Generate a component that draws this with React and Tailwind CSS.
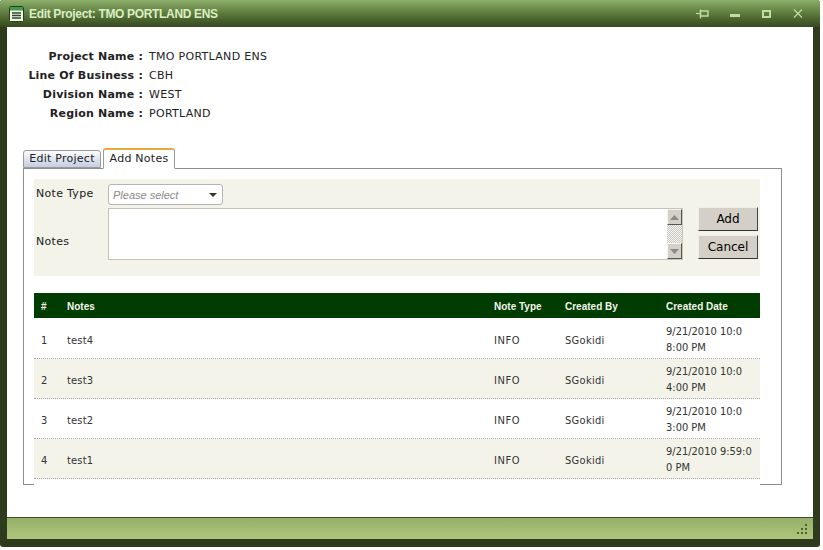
import React from 'react';

const info = [
  { label: 'Project Name :', value: 'TMO PORTLAND ENS' },
  { label: 'Line Of Business :', value: 'CBH' },
  { label: 'Division Name :', value: 'WEST' },
  { label: 'Region Name :', value: 'PORTLAND' },
];

// the date column wraps mid-word in the original grid
const notes = [
  { id: 1, note: 'test4', type: 'INFO', by: 'SGokidi', date: ['9/21/2010 10:0', '8:00 PM'] },
  { id: 2, note: 'test3', type: 'INFO', by: 'SGokidi', date: ['9/21/2010 10:0', '4:00 PM'] },
  { id: 3, note: 'test2', type: 'INFO', by: 'SGokidi', date: ['9/21/2010 10:0', '3:00 PM'] },
  { id: 4, note: 'test1', type: 'INFO', by: 'SGokidi', date: ['9/21/2010 9:59:0', '0 PM'] },
];

const WindowIcon = () => (
  <svg width="15" height="16" viewBox="0 0 15 16">
    <rect x="0.5" y="0.5" width="14" height="15" rx="1" fill="#f2f8e8" stroke="#26401a" />
    <rect x="1" y="1" width="13" height="3.5" fill="#3f9a4a" />
    <path d="M3 7h9M3 9.5h9M3 12h9" stroke="#2c4a2a" strokeWidth="1.3" />
  </svg>
);

const TitleButtons = () => (
  <div className="flex items-center">
    <svg width="13" height="10" viewBox="0 0 13 10" className="mr-[21px]">
      <path d="M0 4.5h4" stroke="#c5dba6" strokeWidth="1.2" />
      <path d="M4.5 2h7.5v5h-7.5z" fill="#5d7a3f" stroke="#c5dba6" strokeWidth="1.4" />
      <path d="M4.5 0.5v9" stroke="#c5dba6" strokeWidth="1.2" />
    </svg>
    <div className="w-[10px] h-[3px] bg-[#c5dba6] mr-[22px] mt-[3px]" />
    <div className="w-[9px] h-[8px] border-2 border-[#c5dba6] mr-[22px]" />
    <svg width="10" height="9" viewBox="0 0 10 9" className="mr-[17px]">
      <path d="M1 0.5l8 8M9 0.5l-8 8" stroke="#c5dba6" strokeWidth="1.2" />
    </svg>
  </div>
);

const ScrollArrow = ({ up }) => (
  <div className="w-[15px] h-[16px] bg-[#d4d0c8] border border-t-[#f4f4f0] border-l-[#f4f4f0] border-r-[#555] border-b-[#555] flex items-center justify-center">
    <svg width="9" height="5" viewBox="0 0 9 5">
      <path d={up ? 'M4.5 0L9 5H0z' : 'M0 0h9L4.5 5z'} fill="#8a8a84" />
    </svg>
  </div>
);

const FormButton = ({ children }) => (
  <button className="w-[60px] h-[24px] bg-[#d4d0c8] border border-t-[#efeee8] border-l-[#efeee8] border-r-[#444] border-b-[#333] text-[12px] text-black flex items-center justify-center">
    {children}
  </button>
);

const NoteRow = ({ row, odd }) => (
  <div className={`grid grid-cols-[26px_427px_71px_101px_101px] h-[40px] items-center border-b border-dotted border-[#a8a8a8] text-[11px] text-[#333] [font-stretch:condensed] ${odd ? 'bg-[#f3f3e9]' : 'bg-white'}`}>
    <div className="pl-[7px] pt-[6px]">{row.id}</div>
    <div className="pl-[7px] pt-[6px] tracking-[0.2px]">{row.note}</div>
    <div className="pl-[7px] pt-[6px] tracking-[0.6px]">{row.type}</div>
    <div className="pl-[7px] pt-[6px] tracking-[0.3px]">{row.by}</div>
    <div className="pl-[7px] pt-[2px] leading-[16px] whitespace-nowrap">
      {row.date.map((line) => (
        <div key={line}>{line}</div>
      ))}
    </div>
  </div>
);

export default function App() {
  return (
    <div className="w-[823px] h-[550px] bg-white overflow-hidden font-['DejaVu_Sans',sans-serif]">
      <div className="w-[820px] h-[547px] bg-[#2e3b1c] rounded-[3px] flex flex-col">
        {/* title bar */}
        <div className="h-[27px] shrink-0 rounded-t-[3px] bg-gradient-to-b from-[#8fb06d] via-[#5c7a3c] to-[#37491f] flex items-center justify-between pl-[9px]">
          <div className="flex items-center gap-[5px]">
            <WindowIcon />
            <span className="font-['Liberation_Sans',sans-serif] font-bold text-[12px] tracking-[-0.33px] text-[#dcedc4]">Edit Project: TMO PORTLAND ENS</span>
          </div>
          <TitleButtons />
        </div>

        {/* content */}
        <div className="mx-[7px] h-[490px] shrink-0 bg-white pt-[21px] pl-[16px] pr-[31px]">
          <div className="flex flex-col text-[11px] tracking-[0.2px] text-[#222]">
            {info.map((item) => (
              <div key={item.label} className="flex h-[19px] items-center">
                <div className="w-[120px] text-right font-bold">{item.label}</div>
                <div className="pl-[6px] tracking-[0.3px]">{item.value}</div>
              </div>
            ))}
          </div>

          {/* tabs */}
          <div className="flex items-end gap-[2px] mt-[24px] h-[21px] relative z-10 -mb-px text-[11px] tracking-[0.25px] text-[#222]">
            <div className="w-[78px] h-[18px] mb-px border border-[#9a9a9a] rounded-t-[3px] bg-gradient-to-b from-[#fdfdff] to-[#c6cde0] flex items-center justify-center">Edit Project</div>
            <div className="w-[72px] h-[21px] border border-[#9a9a9a] border-b-white border-t-2 border-t-[#eba83a] rounded-t-[3px] bg-white flex items-center justify-center">Add Notes</div>
          </div>

          {/* panel */}
          <div className="w-[759px] h-[317px] border border-[#8e8e8e] pt-[10px] px-[10px]">
            <div className="w-[726px] h-[97px] bg-[#f3f3e9] flex pt-[5px]">
              <div className="w-[74px] pl-[2px] text-[11px] tracking-[0.3px] text-[#222]">
                <div className="h-[21px] flex items-center">Note Type</div>
                <div className="h-[52px] mt-[3px] pt-[16px] flex items-center">Notes</div>
              </div>
              <div className="w-[575px]">
                <div className="w-[115px] h-[21px] bg-white border border-[#b5b5b5] rounded-[3px] flex items-center justify-between pl-[4px] pr-[5px]">
                  <span className="font-['Liberation_Sans',sans-serif] italic text-[11px] pt-px text-[#8a8a8a]">Please select</span>
                  <svg width="8" height="4" viewBox="0 0 8 4"><path d="M0 0h8L4 4z" fill="#333" /></svg>
                </div>
                <div className="w-[575px] h-[52px] mt-[3px] bg-white border border-[#c4c4ba] flex justify-end">
                  <div className="w-[15px] h-full flex flex-col justify-between bg-[repeating-conic-gradient(#c9c9c3_0%_25%,#f4f4f0_0%_50%)] bg-[length:2px_2px]">
                    <ScrollArrow up />
                    <ScrollArrow />
                  </div>
                </div>
              </div>
              <div className="ml-[15px] pt-[23px] flex flex-col gap-[4px]">
                <FormButton>Add</FormButton>
                <FormButton>Cancel</FormButton>
              </div>
            </div>

            {/* notes table */}
            <div className="w-[726px] mt-[17px] relative -mb-px">
              <div className="grid grid-cols-[26px_427px_71px_101px_101px] h-[25px] pt-[2px] items-center bg-[#003b00] font-['Liberation_Sans',sans-serif] font-bold text-[10px] text-[#f2f6ea]">
                <div className="pl-[7px]">#</div>
                <div className="pl-[7px]">Notes</div>
                <div className="pl-[7px]">Note Type</div>
                <div className="pl-[7px]">Created By</div>
                <div className="pl-[7px]">Created Date</div>
              </div>
              <div className="h-px bg-white" />
              {notes.map((row, i) => (
                <NoteRow key={row.id} row={row} odd={i % 2 === 1} />
              ))}
              <div className="h-[7px] bg-white" />
            </div>
          </div>
        </div>

        {/* footer */}
        <div className="mx-[7px] h-[22px] shrink-0 border-t border-[#3d4f24] bg-gradient-to-b from-[#95b06a] to-[#b0c57c] flex items-end justify-end pr-[5px] pb-[4px]">
          <svg width="11" height="11" viewBox="0 0 11 11" fill="#4c6032">
            <rect x="8" y="0" width="2" height="2" />
            <rect x="4" y="4" width="2" height="2" />
            <rect x="8" y="4" width="2" height="2" />
            <rect x="0" y="8" width="2" height="2" />
            <rect x="4" y="8" width="2" height="2" />
            <rect x="8" y="8" width="2" height="2" />
          </svg>
        </div>
      </div>
    </div>
  );
}
